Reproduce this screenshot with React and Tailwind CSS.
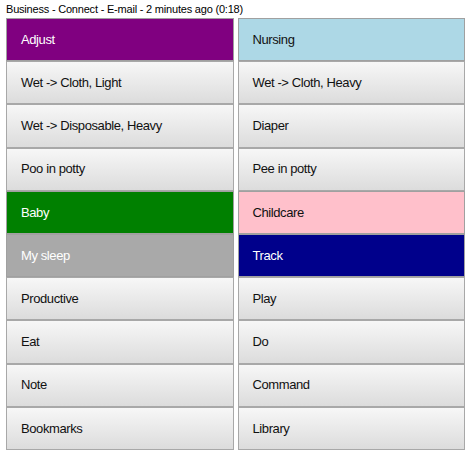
import React from "react";

const rows = [
  [["Adjust", "bg-[#800080] text-white"], ["Nursing", "bg-[#add8e6] text-[#111]"]],
  [["Wet -> Cloth, Light"], ["Wet -> Cloth, Heavy"]],
  [["Wet -> Disposable, Heavy"], ["Diaper"]],
  [["Poo in potty"], ["Pee in potty"]],
  [["Baby", "bg-[#008000] text-white"], ["Childcare", "bg-[#ffc0cb] text-[#111]"]],
  [["My sleep", "bg-[#a9a9a9] text-white"], ["Track", "bg-[#00008b] text-white"]],
  [["Productive"], ["Play"]],
  [["Eat"], ["Do"]],
  [["Note"], ["Command"]],
  [["Bookmarks"], ["Library"]],
];

function Btn({ label, cls }) {
  const style = cls
    ? cls + " border-[#a0a0a0]"
    : "bg-gradient-to-b from-[#f7f7f7] to-[#dcdcdc] text-[#111] border-[#a8a8a8]";
  return (
    <div className={"flex items-center pl-[14px] border text-[13px] tracking-[-0.4px] " + style}>
      {label}
    </div>
  );
}

export default function App() {
  return (
    <div className="w-[474px] h-[460px] bg-white" style={{ fontFamily: '"Liberation Sans", Arial, sans-serif' }}>
      <div className="pl-[6px] text-[11px] tracking-[-0.2px] leading-[18px] text-black h-[18px]">
        Business - Connect - E-mail - 2 minutes ago (0:18)
      </div>
      <div className="ml-[6px] w-[459px] grid grid-cols-2 gap-x-[4px] auto-rows-[43.2px]">
        {rows.map((r, i) => (
          <React.Fragment key={i}>
            <Btn label={r[0][0]} cls={r[0][1]} />
            <Btn label={r[1][0]} cls={r[1][1]} />
          </React.Fragment>
        ))}
      </div>
    </div>
  );
}
